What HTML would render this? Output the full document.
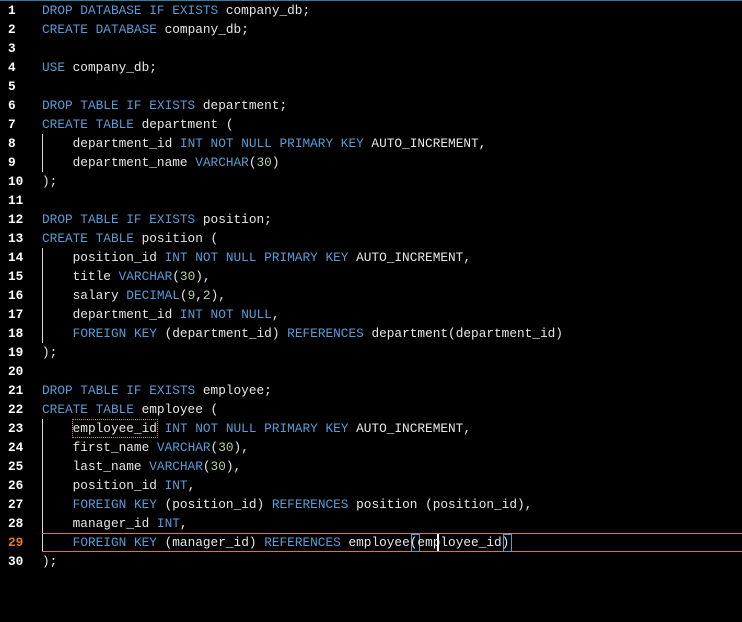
<!DOCTYPE html><html><head><style>
body{margin:0;background:#000;width:742px;height:622px;overflow:hidden;position:relative;font-family:"Liberation Mono",monospace;font-size:12.77px;color:#e6e6e6}
#top{position:absolute;left:0;top:0;width:742px;height:1px;background:#2f7f9f}
.l{position:absolute;left:0;height:19px;line-height:19px;white-space:pre;width:742px}
.n{position:absolute;left:8px;font-weight:bold;color:#fff}
.c{position:absolute;left:42px}
.k{color:#569cd6}.d{color:#b5cea8}
.g{position:absolute;left:42px;width:1px;background:#ddd}
</style></head><body><div id="top"></div>
<div class="g" style="top:134px;height:38px"></div>
<div class="g" style="top:248px;height:95px"></div>
<div class="g" style="top:419px;height:133px"></div>
<div style="position:absolute;left:42px;top:533px;width:700px;height:17px;border-top:1px solid #d87a2a;border-bottom:1px solid #d87a2a"></div>
<div style="position:absolute;left:72px;top:419px;width:84px;height:17px;border:1px dotted #c89030"></div>
<div style="position:absolute;left:411px;top:534px;width:7px;height:16px;border:1px solid #4a9ed6"></div>
<div style="position:absolute;left:503px;top:534px;width:7px;height:16px;border:1px solid #4a9ed6"></div>
<div style="position:absolute;left:437px;top:534px;width:2px;height:17px;background:#fff"></div>
<div class="l" style="top:1px"><span class="n">1</span><span class="c"><span class="k">DROP DATABASE IF EXISTS</span> company_db;</span></div>
<div class="l" style="top:20px"><span class="n">2</span><span class="c"><span class="k">CREATE DATABASE</span> company_db;</span></div>
<div class="l" style="top:39px"><span class="n">3</span></div>
<div class="l" style="top:58px"><span class="n">4</span><span class="c"><span class="k">USE</span> company_db;</span></div>
<div class="l" style="top:77px"><span class="n">5</span></div>
<div class="l" style="top:96px"><span class="n">6</span><span class="c"><span class="k">DROP TABLE IF EXISTS</span> department;</span></div>
<div class="l" style="top:115px"><span class="n">7</span><span class="c"><span class="k">CREATE TABLE</span> department (</span></div>
<div class="l" style="top:134px"><span class="n">8</span><span class="c">    department_id <span class="k">INT NOT NULL PRIMARY KEY</span> AUTO_INCREMENT,</span></div>
<div class="l" style="top:153px"><span class="n">9</span><span class="c">    department_name <span class="k">VARCHAR</span>(<span class="d">30</span>)</span></div>
<div class="l" style="top:172px"><span class="n">10</span><span class="c">);</span></div>
<div class="l" style="top:191px"><span class="n">11</span></div>
<div class="l" style="top:210px"><span class="n">12</span><span class="c"><span class="k">DROP TABLE IF EXISTS</span> position;</span></div>
<div class="l" style="top:229px"><span class="n">13</span><span class="c"><span class="k">CREATE TABLE</span> position (</span></div>
<div class="l" style="top:248px"><span class="n">14</span><span class="c">    position_id <span class="k">INT NOT NULL PRIMARY KEY</span> AUTO_INCREMENT,</span></div>
<div class="l" style="top:267px"><span class="n">15</span><span class="c">    title <span class="k">VARCHAR</span>(<span class="d">30</span>),</span></div>
<div class="l" style="top:286px"><span class="n">16</span><span class="c">    salary <span class="k">DECIMAL</span>(<span class="d">9</span>,<span class="d">2</span>),</span></div>
<div class="l" style="top:305px"><span class="n">17</span><span class="c">    department_id <span class="k">INT NOT NULL</span>,</span></div>
<div class="l" style="top:324px"><span class="n">18</span><span class="c">    <span class="k">FOREIGN KEY</span> (department_id) <span class="k">REFERENCES</span> department(department_id)</span></div>
<div class="l" style="top:343px"><span class="n">19</span><span class="c">);</span></div>
<div class="l" style="top:362px"><span class="n">20</span></div>
<div class="l" style="top:381px"><span class="n">21</span><span class="c"><span class="k">DROP TABLE IF EXISTS</span> employee;</span></div>
<div class="l" style="top:400px"><span class="n">22</span><span class="c"><span class="k">CREATE TABLE</span> employee (</span></div>
<div class="l" style="top:419px"><span class="n">23</span><span class="c">    employee_id <span class="k">INT NOT NULL PRIMARY KEY</span> AUTO_INCREMENT,</span></div>
<div class="l" style="top:438px"><span class="n">24</span><span class="c">    first_name <span class="k">VARCHAR</span>(<span class="d">30</span>),</span></div>
<div class="l" style="top:457px"><span class="n">25</span><span class="c">    last_name <span class="k">VARCHAR</span>(<span class="d">30</span>),</span></div>
<div class="l" style="top:476px"><span class="n">26</span><span class="c">    position_id <span class="k">INT</span>,</span></div>
<div class="l" style="top:495px"><span class="n">27</span><span class="c">    <span class="k">FOREIGN KEY</span> (position_id) <span class="k">REFERENCES</span> position (position_id),</span></div>
<div class="l" style="top:514px"><span class="n">28</span><span class="c">    manager_id <span class="k">INT</span>,</span></div>
<div class="l" style="top:533px"><span class="n" style="color:#e07b2a">29</span><span class="c">    <span class="k">FOREIGN KEY</span> (manager_id) <span class="k">REFERENCES</span> employee(employee_id)</span></div>
<div class="l" style="top:552px"><span class="n">30</span><span class="c">);</span></div>
</body></html>
